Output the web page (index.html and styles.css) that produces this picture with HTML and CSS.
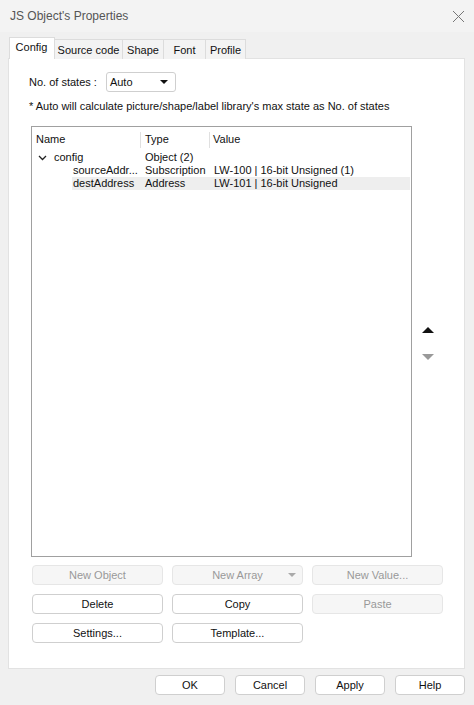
FILE: index.html
```html
<!DOCTYPE html>
<html lang="en">
<head>
    <meta charset="UTF-8">
    <meta name="viewport" content="width=device-width, initial-scale=1.0">
    <title>JS Object's Properties</title>
    <link rel="stylesheet" href="styles.css">
</head>
<body>
    <div class="window">
        <div class="titlebar">
            <span class="title">JS Object's Properties</span>
            <svg class="close" width="13" height="13" viewBox="0 0 13 13">
                <path d="M1 1 L12 12 M12 1 L1 12" stroke="#777" stroke-width="1" fill="none"/>
            </svg>
        </div>

        <div class="tabs">
            <div class="tab active">Config</div>
            <div class="tab t-source">Source code</div>
            <div class="tab t-shape">Shape</div>
            <div class="tab t-font">Font</div>
            <div class="tab t-profile">Profile</div>
        </div>

        <div class="panel">
            <div class="states">
                <span>No. of states :</span>
                <div class="combo">
                    <span>Auto</span>
                    <span class="caret"></span>
                </div>
            </div>
            <p class="note">* Auto will calculate picture/shape/label library's max state as No. of states</p>

            <div class="tree-area">
                <div class="tree">
                    <div class="row head">
                        <span class="c-name">Name</span>
                        <span class="c-type">Type</span>
                        <span class="c-value">Value</span>
                    </div>
                    <div class="row">
                        <span class="c-name">
                            <svg class="chev" width="9" height="6" viewBox="0 0 9 6">
                                <path d="M1 1 L4.5 4.5 L8 1" stroke="#222" stroke-width="1.3" fill="none"/>
                            </svg>config
                        </span>
                        <span class="c-type">Object (2)</span>
                        <span class="c-value"></span>
                    </div>
                    <div class="row">
                        <span class="c-name child">sourceAddr...</span>
                        <span class="c-type">Subscription</span>
                        <span class="c-value">LW-100 | 16-bit Unsigned (1)</span>
                    </div>
                    <div class="row hover">
                        <span class="c-name child">destAddress</span>
                        <span class="c-type">Address</span>
                        <span class="c-value">LW-101 | 16-bit Unsigned</span>
                    </div>
                </div>
                <div class="movers">
                    <span class="up"></span>
                    <span class="down"></span>
                </div>
            </div>

            <div class="actions">
                <button class="btn" disabled>New Object</button>
                <button class="btn drop" disabled>New Array<span class="caret grey"></span></button>
                <button class="btn" disabled>New Value...</button>
                <button class="btn">Delete</button>
                <button class="btn">Copy</button>
                <button class="btn" disabled>Paste</button>
                <button class="btn">Settings...</button>
                <button class="btn">Template...</button>
            </div>
        </div>

        <div class="footer">
            <button class="btn foot">OK</button>
            <button class="btn foot">Cancel</button>
            <button class="btn foot">Apply</button>
            <button class="btn foot">Help</button>
        </div>
    </div>
</body>
</html>
```

FILE: styles.css
```css
body {
    margin: 0;
    padding: 0;
    background-color: #f0f0f0;
    font-family: 'Liberation Sans', Arial, sans-serif;
    font-size: 11px;
    color: #111;
}
.window {
    width: 474px;
    height: 705px;
    background-color: #f0f0f0;
    display: flex;
    flex-direction: column;
}
.titlebar {
    height: 32px;
    display: flex;
    align-items: center;
    justify-content: space-between;
    padding: 0 9px 0 10px;
    background-color: #f3f3f3;
}
.title {
    font-size: 12px;
    color: #555;
}
.tabs {
    display: flex;
    padding: 6px 0 0 9px;
    height: 20px;
    position: relative;
    z-index: 1;
}
.tab {
    background-color: #f3f3f3;
    border: 1px solid #dcdcdc;
    border-bottom: none;
    border-left: none;
    height: 19px;
    line-height: 20px;
    margin-top: 1px;
    text-align: center;
    color: #111;
}
.tab.active {
    width: 43px;
    background-color: #fff;
    border-left: 1px solid #dcdcdc;
    height: 21px;
    margin-top: -1px;
    line-height: 18px;
    padding-right: 1px;
}
.t-source {
    width: 67px;
}
.t-shape {
    width: 40px;
}
.t-font {
    width: 41px;
}
.t-profile {
    width: 39px;
}
.panel {
    margin: 0 9px 0 8px;
    background-color: #fff;
    border: 1px solid #e2e2e2;
    height: 611px;
    padding: 13px 0 0 20px;
    box-sizing: border-box;
}
.states {
    display: flex;
    align-items: center;
    gap: 9px;
}
.combo {
    width: 58px;
    height: 18px;
    border: 1px solid #cfcfcf;
    border-radius: 3px;
    display: flex;
    align-items: center;
    justify-content: space-between;
    padding: 0 7px 0 3px;
}
.caret {
    width: 0;
    height: 0;
    border-left: 4px solid transparent;
    border-right: 4px solid transparent;
    border-top: 4px solid #111;
}
.caret.grey {
    border-top-color: #aaa;
}
.note {
    margin: 7px 0 0;
    line-height: 14px;
}
.tree-area {
    display: flex;
    align-items: flex-start;
    margin-top: 13px;
}
.tree {
    margin-left: 2px;
    width: 381px;
    height: 431px;
    border: 1px solid #a0a0a0;
    padding-top: 5px;
    box-sizing: border-box;
}
.row {
    display: flex;
    height: 13px;
    line-height: 13px;
    margin: 0 1px;
}
.row.head {
    height: 16px;
    line-height: 14px;
    margin-bottom: 3px;
}
.row.hover {
    background: linear-gradient(to right, transparent 39px, #eeeeee 39px);
}
.c-name {
    width: 105px;
    padding-left: 3px;
    display: flex;
    align-items: center;
    white-space: nowrap;
}
.c-name.child {
    padding-left: 40px;
    width: 68px;
}
.c-type {
    width: 66px;
    padding-left: 4px;
}
.c-value {
    padding-left: 3px;
}
.head .c-name,
.head .c-type {
    border-right: 1px solid #e0e0e0;
    height: 16px;
}
.head .c-name {
    width: 104px;
    align-items: flex-start;
}
.head .c-type {
    width: 64px;
}
.chev {
    margin: 0 7px 0 2px;
}
.movers {
    display: flex;
    flex-direction: column;
    align-items: center;
    gap: 21px;
    margin: 201px 0 0 10px;
}
.up {
    width: 0;
    height: 0;
    border-left: 6px solid transparent;
    border-right: 6px solid transparent;
    border-bottom: 6px solid #111;
}
.down {
    width: 0;
    height: 0;
    border-left: 6px solid transparent;
    border-right: 6px solid transparent;
    border-top: 6px solid #999;
}
.actions {
    display: grid;
    grid-template-columns: 131px 131px 131px;
    column-gap: 9px;
    row-gap: 9px;
    margin: 8px 0 0 3px;
}
.btn {
    height: 20px;
    background-color: #fff;
    border: 1px solid #cfcfcf;
    border-radius: 4px;
    font-family: 'Liberation Sans', Arial, sans-serif;
    font-size: 11px;
    color: #111;
    padding: 0;
}
.btn:disabled {
    background-color: #f6f6f6;
    border-color: #e6e6e6;
    color: #999;
}
.btn.drop {
    position: relative;
}
.btn.drop .caret {
    position: absolute;
    right: 6px;
    top: 7px;
}
.footer {
    display: flex;
    justify-content: flex-end;
    gap: 10px;
    padding: 6px 9px 0 0;
}
.btn.foot {
    width: 70px;
    height: 20px;
    font-size: 11px;
}
```
